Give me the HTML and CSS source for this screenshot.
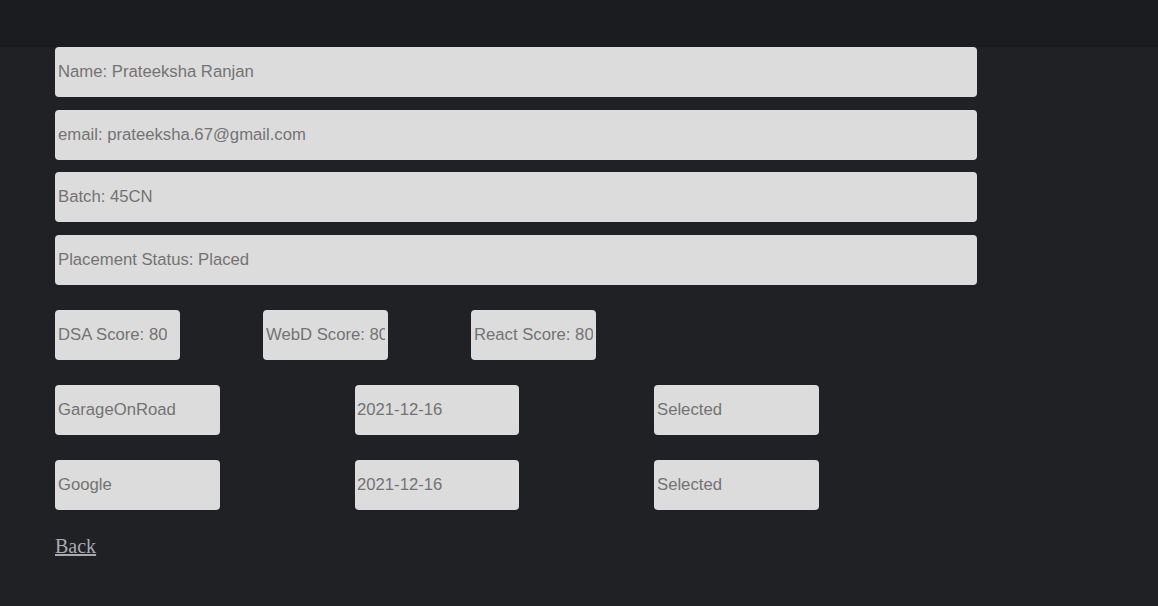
FILE: index.html
```html
<!DOCTYPE html>
<html>
<head>
<meta charset="utf-8">
<link rel="stylesheet" href="styles.css">
</head>
<body>
<header class="topbar"></header>
<main class="content">
  <div class="fields">
    <div class="field wide"><span class="val">Name: Prateeksha Ranjan</span></div>
    <div class="field wide"><span class="val">email: prateeksha.67@gmail.com</span></div>
    <div class="field wide"><span class="val">Batch: 45CN</span></div>
    <div class="field wide"><span class="val">Placement Status: Placed</span></div>
  </div>
  <div class="row scores">
    <div class="field score"><span class="val">DSA Score: 80</span></div>
    <div class="field score"><span class="val">WebD Score: 80</span></div>
    <div class="field score"><span class="val">React Score: 80</span></div>
  </div>
  <div class="row interview">
    <div class="field company"><span class="val">GarageOnRoad</span></div>
    <div class="field date"><span class="val">2021-12-16</span></div>
    <div class="field result"><span class="val">Selected</span></div>
  </div>
  <div class="row interview">
    <div class="field company"><span class="val">Google</span></div>
    <div class="field date"><span class="val">2021-12-16</span></div>
    <div class="field result"><span class="val">Selected</span></div>
  </div>
  <a class="back" href="#">Back</a>
</main>
</body>
</html>
```
FILE: styles.css
```css
html, body {
  margin: 0;
  padding: 0;
  background: #202125;
  height: 100%;
}
.topbar {
  height: 47px;
  background: #1b1c1f;
}
.content {
  padding-left: 55px;
  display: flex;
  flex-direction: column;
  align-items: flex-start;
}
.fields {
  display: flex;
  flex-direction: column;
  gap: 12.67px;
}
.field {
  box-sizing: border-box;
  height: 50px;
  background: #dcdcdc;
  border-radius: 4px;
  padding: 0 3px;
  display: flex;
  align-items: center;
  font-family: "Liberation Sans", Arial, sans-serif;
  font-size: 16.7px;
  color: #737373;
  white-space: nowrap;
}
.val {
  min-width: 0;
  overflow: hidden;
}
.wide {
  width: 922px;
}
.row {
  display: flex;
  margin-top: 25px;
}
.scores {
  gap: 83px;
}
.score {
  width: 125px;
}
.interview {
  gap: 135px;
}
.company { width: 165px; }
.date { width: 164px; padding-left: 2px; }
.result { width: 165px; }
.back {
  margin-top: 25px;
  font-family: "Liberation Serif", "Times New Roman", serif;
  font-size: 20px;
  color: #a8aab0;
  text-decoration: underline;
}
```
